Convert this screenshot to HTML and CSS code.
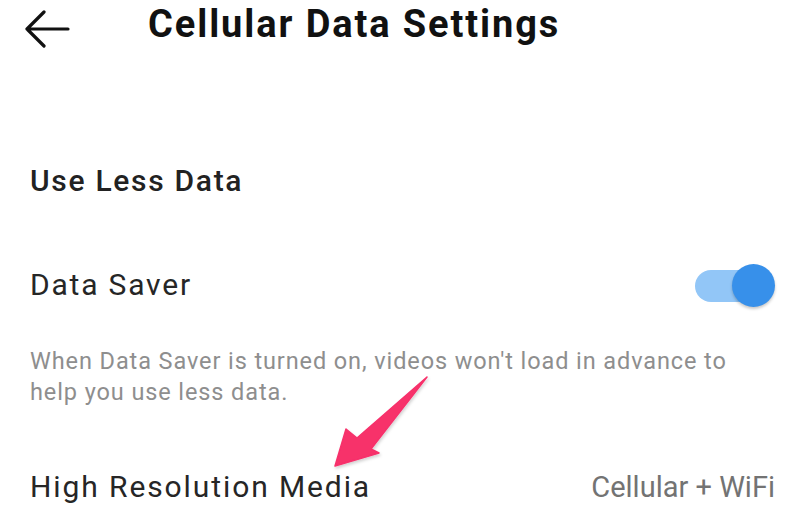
FILE: index.html
```html
<!DOCTYPE html>
<html>
<head>
<meta charset="utf-8">
<link rel="stylesheet" href="styles.css">
</head>
<body>
<div class="page">
  <header class="header">
    <svg class="back" width="46" height="48" viewBox="0 0 46 48">
      <path d="M19 12 L2 29 L19 46 M2 29 H43" fill="none" stroke="#111" stroke-width="3.2" stroke-linecap="round" stroke-linejoin="round"/>
    </svg>
    <h1 class="title">Cellular Data Settings</h1>
  </header>
  <h2 class="section">Use Less Data</h2>
  <div class="row">
    <span class="label">Data Saver</span>
    <span class="toggle"><span class="track"></span><span class="knob"></span></span>
  </div>
  <p class="desc">When Data Saver is turned on, videos won't load in advance to help you use less data.</p>
  <div class="row row-media">
    <span class="label">High Resolution Media</span>
    <span class="value">Cellular + WiFi</span>
  </div>
  <svg class="pointer" width="800" height="510" viewBox="0 0 800 510">
    <defs>
      <filter id="sh" x="-20%" y="-20%" width="140%" height="140%">
        <feDropShadow dx="1" dy="2" stdDeviation="1.5" flood-color="#000" flood-opacity="0.18"/>
      </filter>
    </defs>
    <polygon points="335,466 346,429 357,438 427,377 371,449 379,453" fill="#f7306b" stroke="#f7306b" stroke-width="1.5" stroke-linejoin="round" filter="url(#sh)"/>
  </svg>
</div>
</body>
</html>
```
FILE: styles.css
```css
html, body {
  margin: 0;
  padding: 0;
  background: #ffffff;
}
.page {
  position: relative;
  width: 800px;
  height: 510px;
  overflow: hidden;
  font-family: Roboto, "Liberation Sans", sans-serif;
}
.header {
  display: flex;
  align-items: flex-start;
  height: 48px;
  padding-left: 25px;
}
.back {
  display: block;
  flex: none;
}
.title {
  margin: 0 0 0 77px;
  font-size: 38px;
  line-height: 48px;
  font-weight: 700;
  letter-spacing: 1.9px;
  color: #111111;
}
.section {
  margin: 113px 0 0 30px;
  font-size: 30px;
  line-height: 40px;
  font-weight: 500;
  letter-spacing: 1.7px;
  color: #222222;
}
.row {
  display: flex;
  align-items: center;
  justify-content: space-between;
  margin: 62px 0 0 30px;
  padding-right: 25px;
  height: 44px;
}
.label {
  font-size: 30px;
  line-height: 44px;
  font-weight: 400;
  letter-spacing: 1.8px;
  color: #262626;
}
.row-media .label {
  letter-spacing: 1.9px;
}
.toggle {
  position: relative;
  width: 80px;
  height: 44px;
}
.track {
  position: absolute;
  left: 0;
  top: 7px;
  width: 66px;
  height: 32px;
  border-radius: 16px;
  background: #92c6f7;
}
.knob {
  position: absolute;
  right: 0;
  top: 1px;
  width: 43px;
  height: 43px;
  border-radius: 50%;
  background: #3790ea;
  box-shadow: 0 2px 3px rgba(0, 0, 0, 0.22);
}
.desc {
  margin: 39px 30px 0 30px;
  font-size: 23.5px;
  line-height: 31px;
  letter-spacing: 0.9px;
  color: #8e8e8e;
}
.row-media {
  margin-top: 57px;
}
.value {
  font-size: 29px;
  line-height: 44px;
  color: #737373;
}
.pointer {
  position: absolute;
  left: 0;
  top: 0;
  pointer-events: none;
}
```
